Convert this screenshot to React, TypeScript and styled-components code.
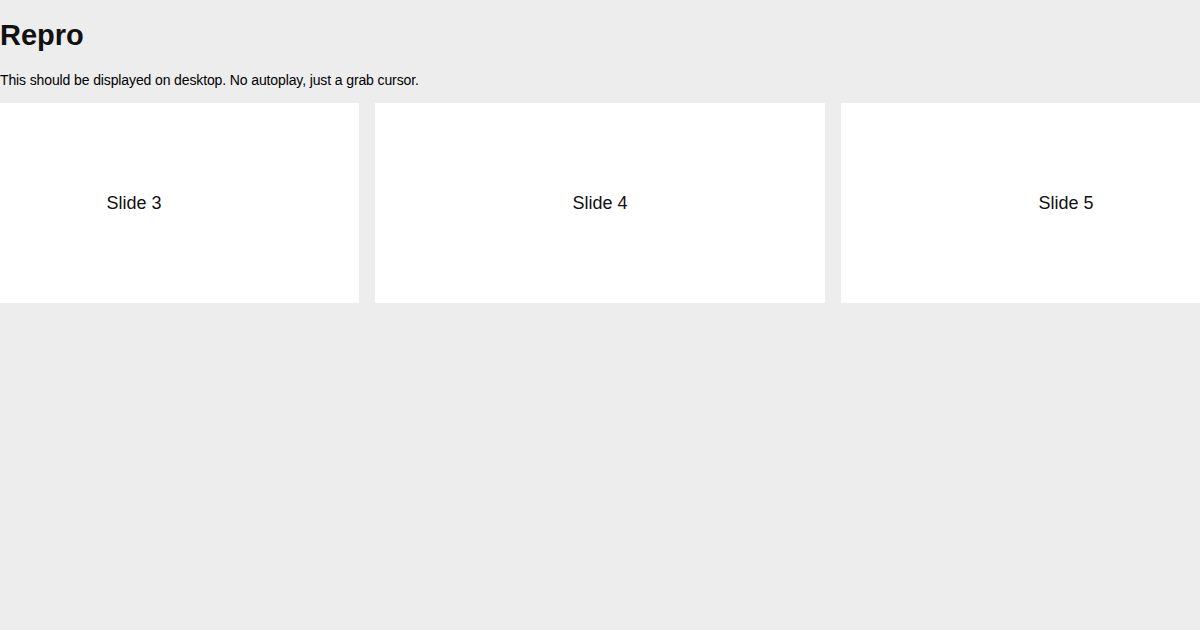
import React from "react";
import styled, { createGlobalStyle } from "styled-components";

const Global = createGlobalStyle`
  html, body {
    margin: 0;
    padding: 0;
    background: #ededed;
    font-family: "Liberation Sans", Arial, sans-serif;
    color: #000;
  }
  #root {
    min-height: 630px;
  }
`;

const Page = styled.div`
  display: flex;
  flex-direction: column;
  width: 1200px;
  height: 630px;
  overflow: hidden;
`;

const Title = styled.h1`
  margin: 18px 0 0;
  font-size: 29px;
  line-height: 34px;
  font-weight: bold;
  color: #111;
`;

const Intro = styled.p`
  margin: 20px 0 0;
  font-size: 14px;
  line-height: 16px;
  letter-spacing: -0.12px;
`;

const Viewport = styled.div`
  margin-top: 15px;
  width: 100%;
  overflow: hidden;
  cursor: grab;
`;

const Track = styled.div<{ $offset: number }>`
  display: flex;
  gap: 16px;
  transform: translateX(${(p) => -p.$offset}px);
`;

const Slide = styled.div`
  flex: 0 0 450px;
  height: 200px;
  background: #fff;
  display: flex;
  align-items: center;
  justify-content: center;
  font-size: 18px;
  color: #111;
`;

const slides = [3, 4, 5];

function App() {
  return (
    <Page>
      <Global />
      <Title>Repro</Title>
      <Intro>This should be displayed on desktop. No autoplay, just a grab cursor.</Intro>
      <Viewport>
        <Track $offset={91}>
          {slides.map((n) => (
            <Slide key={n}>Slide {n}</Slide>
          ))}
        </Track>
      </Viewport>
    </Page>
  );
}

export default App;
